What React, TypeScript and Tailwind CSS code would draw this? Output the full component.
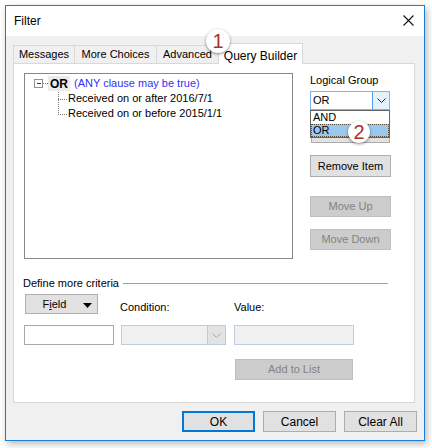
import React from "react";

const font = "font-['Liberation_Sans',Arial,sans-serif]";

function Badge({ n, className }: { n: string; className: string }) {
  return (
    <div
      className={`absolute rounded-full bg-white shadow-[0_1px_3px_rgba(0,0,0,0.45)] flex items-center justify-center text-[#a8322d] text-[20px] leading-none ${className}`}
    >
      {n}
    </div>
  );
}

function Btn({
  children,
  className = "",
  disabled = false,
}: {
  children: React.ReactNode;
  className?: string;
  disabled?: boolean;
}) {
  const tone = disabled
    ? "bg-[#cccccc] border-[#bfbfbf] text-[#838383]"
    : "bg-[#e1e1e1] border-[#adadad] text-black";
  return (
    <div className={`border flex items-center justify-center ${tone} ${className}`}>
      {children}
    </div>
  );
}

function Chevron({ color }: { color: string }) {
  return (
    <svg width="9" height="5" viewBox="0 0 9 5">
      <path d="M0.5 0.5 L4.5 4.5 L8.5 0.5" fill="none" stroke={color} strokeWidth="1" />
    </svg>
  );
}

function Tab({
  label,
  w,
  selected = false,
  edge = "",
}: {
  label: string;
  w: string;
  selected?: boolean;
  edge?: string;
}) {
  if (selected) {
    return (
      <div
        className={`${w} h-[21px] -mb-px relative z-10 bg-white border border-b-0 border-[#d9d9d9] flex items-start justify-center pt-[3px] text-[12px]`}
      >
        {label}
      </div>
    );
  }
  return (
    <div
      className={`${w} h-[18px] bg-[#f0f0f0] border-t border-[#d9d9d9] ${edge} flex items-center justify-center`}
    >
      {label}
    </div>
  );
}

function TreeLines() {
  return (
    <svg
      className="absolute left-0 top-0"
      width="80"
      height="60"
      viewBox="0 0 80 60"
      shapeRendering="crispEdges"
    >
      <rect x="9.5" y="5.5" width="8" height="8" fill="#fff" stroke="#919191" />
      <line x1="11.5" y1="9.5" x2="16" y2="9.5" stroke="#333" />
      <line x1="18" y1="9.5" x2="23" y2="9.5" stroke="#7a7a7a" strokeDasharray="1 1" />
      <line x1="33.5" y1="18" x2="33.5" y2="41" stroke="#7a7a7a" strokeDasharray="1 1" />
      <line x1="33" y1="25.5" x2="43" y2="25.5" stroke="#7a7a7a" strokeDasharray="1 1" />
      <line x1="33" y1="40.5" x2="43" y2="40.5" stroke="#7a7a7a" strokeDasharray="1 1" />
    </svg>
  );
}

export default function App() {
  return (
    <div className={`w-[432px] h-[448px] bg-white pt-[5px] pl-[5px] ${font} text-[11px] text-black`}>
      {/* dialog window */}
      <div className="w-[420px] h-[436px] border border-[#1a7fd4] bg-[#f0f0f0] shadow-[2px_3px_7px_rgba(0,0,0,0.28)] flex flex-col">
        {/* title bar */}
        <div className="h-[30px] bg-white flex items-center justify-between pl-[8px] pr-[10px]">
          <span className="text-[12px]">Filter</span>
          <svg width="11" height="11" viewBox="0 0 11 11" className="-mt-[2px]">
            <path d="M0.5 0.5 L10.5 10.5 M10.5 0.5 L0.5 10.5" stroke="#111" strokeWidth="1.1" />
          </svg>
        </div>

        {/* body */}
        <div className="flex-1 flex flex-col pl-[7px] pr-[7px] pt-[7px]">
          {/* tab strip */}
          <div className="relative flex items-end h-[20px]">
            <Tab label="Messages" w="w-[62px]" edge="border-l border-r" />
            <Tab label="More Choices" w="w-[82px]" edge="border-r" />
            <Tab label="Advanced" w="w-[61px]" />
            <Tab label="Query Builder" w="w-[85px]" selected />
            <Badge n="1" className="w-[24px] h-[24px] left-[193px] top-[-14px] z-20" />
          </div>

          {/* tab page */}
          <div className="w-[402px] h-[340px] bg-white border border-[#d9d9d9] flex flex-col">
            {/* tree and logical group */}
            <div className="flex pt-[9px] pl-[10px]">
              <div className="relative w-[269px] h-[186px] border border-[#828790] bg-white pt-[2px]">
                <TreeLines />
                <div className="h-[15px] flex items-center pl-[23px]">
                  <span className="bg-[#ebebeb] px-[2px] h-[15px] flex items-center font-bold text-[12px]">OR</span>
                  <span className="ml-[4px] text-[#3232f5]">(ANY clause may be true)</span>
                </div>
                <div className="h-[15px] flex items-center pl-[43px]">Received on or after 2016/7/1</div>
                <div className="h-[15px] flex items-center pl-[43px]">Received on or before 2015/1/1</div>
              </div>

              <div className="relative ml-[17px] w-[81px] flex flex-col">
                <div className="h-[14px] flex items-center">Logical Group</div>
                <div className="relative mt-[4px] w-[80px] h-[19px] border border-[#7eb4ea] bg-white flex items-center">
                  <span className="pl-[2px] flex-1">OR</span>
                  <div className="w-[17px] h-[17px] bg-[#e5f1fb] border-l border-[#569de5] flex items-center justify-center">
                    <Chevron color="#222" />
                  </div>
                  {/* open dropdown list */}
                  <div className="absolute left-[-1px] top-[18px] w-[80px] border border-[#646464] bg-white z-10">
                    <div className="h-[13px] flex items-center pl-[2px] leading-none">AND</div>
                    <div className="h-[13px] flex items-center pl-[1px] leading-none bg-[#99c9ef] border border-dotted border-[#5a4a3a]">OR</div>
                  </div>
                </div>
                <Btn className="mt-[12px] ml-px w-[79px] h-[21px]">Add</Btn>
                <Btn className="mt-[12px] w-[81px] h-[22px]">Remove Item</Btn>
                <Btn disabled className="mt-[19px] w-[81px] h-[21px]">Move Up</Btn>
                <Btn disabled className="mt-[12px] w-[81px] h-[21px]">Move Down</Btn>
                <Badge n="2" className="w-[22px] h-[22px] left-[38px] top-[48px] z-20" />
              </div>
            </div>

            {/* define more criteria */}
            <div className="mt-[17px] h-[14px] flex items-center pl-[9px] pr-[26px]">
              <span>Define more criteria</span>
              <div className="flex-1 ml-[4px] h-px bg-[#a0a0a0]" />
            </div>

            <div className="mt-[4px] h-[20px] flex items-end pl-[10px]">
              <div className="w-[90px]">
                <Btn className="ml-px w-[73px] h-[20px] relative">
                  <span className="mr-[14px]">
                    F<span className="underline">i</span>eld
                  </span>
                  <svg width="9" height="5" viewBox="0 0 9 5" className="absolute right-[5px] top-[8px]">
                    <path d="M0 0 H9 L4.5 5 Z" fill="#000" />
                  </svg>
                </Btn>
              </div>
              <div className="ml-[6px] w-[108px] h-[14px] flex items-center">Condition:</div>
              <div className="ml-[6px] h-[14px] flex items-center">Value:</div>
            </div>

            <div className="mt-[11px] h-[20px] flex pl-[10px]">
              <div className="w-[90px] h-[20px] border border-[#a8a8a8] bg-white" />
              <div className="ml-[7px] w-[105px] h-[20px] border border-[#b9cce2] bg-[#f0f0f0] flex justify-end">
                <div className="w-[18px] h-[18px] bg-[#e3e3e3] border-l border-[#c8c8c8] flex items-center justify-center">
                  <Chevron color="#a6a6a6" />
                </div>
              </div>
              <div className="ml-[8px] w-[120px] h-[20px] border border-[#bfd0e4] bg-[#f0f0f0]" />
            </div>

            <div className="mt-[14px] flex pl-[221px]">
              <Btn disabled className="w-[118px] h-[21px]">Add to List</Btn>
            </div>
          </div>

          {/* dialog buttons */}
          <div className="mt-[8px] flex justify-end gap-[8px]">
            <div className="w-[73px] h-[21px] bg-[#e1e1e1] border-2 border-[#0078d7] flex items-center justify-center text-[12px]">OK</div>
            <Btn className="w-[73px] h-[21px] text-[12px]">Cancel</Btn>
            <Btn className="w-[73px] h-[21px] text-[12px]">Clear All</Btn>
          </div>
        </div>
      </div>
    </div>
  );
}
